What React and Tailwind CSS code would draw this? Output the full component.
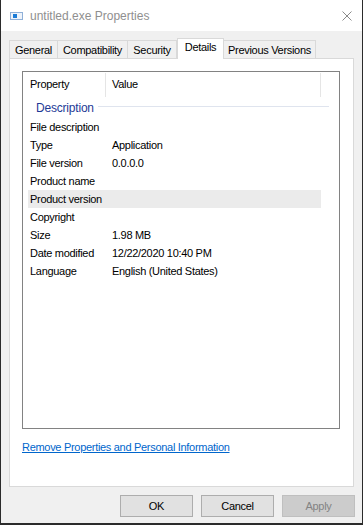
import React from "react";

const rows = [
	["File description", ""],
	["Type", "Application"],
	["File version", "0.0.0.0"],
	["Product name", ""],
	["Product version", ""],
	["Copyright", ""],
	["Size", "1.98 MB"],
	["Date modified", "12/22/2020 10:40 PM"],
	["Language", "English (United States)"],
];

const tabs = [
	{ label: "General", cls: "w-[48px] h-[18px] border-t border-l" },
	{ label: "Compatibility", cls: "w-[70px] h-[18px] border-t border-l" },
	{ label: "Security", cls: "w-[50px] h-[18px] border-t border-l border-r" },
	{ label: "Details", cls: "w-[47px] h-[21px] -mb-px border-t border-l border-r bg-white relative z-10 pb-[3px]", active: true },
	{ label: "Previous Versions", cls: "w-[92px] h-[18px] border-t border-r" },
];

const AppIcon = () => (
	<svg width="13" height="8" viewBox="0 0 13 8">
		<rect x="0.5" y="0.5" width="12" height="7" fill="#eef3fa" stroke="#8fb0d8" />
		<rect x="3" y="2" width="4" height="4" fill="#1a7bd6" />
	</svg>
);

const CloseIcon = () => (
	<svg width="10" height="10" viewBox="0 0 10 10">
		<path d="M0.5 0.5 L9.5 9.5 M9.5 0.5 L0.5 9.5" stroke="#8a8a8a" strokeWidth="1" />
	</svg>
);

export default function App() {
	return (
		<div
			className="w-[363px] h-[525px] bg-[#f0f0f0] border-l border-r border-b-2 border-[#2b2b2b] flex flex-col text-[11px] tracking-[-0.3px] text-black"
			style={{ fontFamily: '"Liberation Sans", Arial, sans-serif' }}
		>
			{/* Title bar */}
			<div className="h-[31px] bg-white flex items-center pl-[9px] pr-[10px] shrink-0">
				<AppIcon />
				<span className="ml-[7px] text-[12px] tracking-normal text-[#8f8f8f]">untitled.exe Properties</span>
				<div className="ml-auto">
					<CloseIcon />
				</div>
			</div>

			{/* Tabs */}
			<div className="pt-[7px] px-[8px] flex items-end h-[27px]">
				{tabs.map((t) => (
					<div
						key={t.label}
						className={`${t.cls} border-[#d9d9d9] flex items-center justify-center ${t.active ? "" : "bg-[#f0f0f0] pt-[2px]"}`}
					>
						{t.label}
					</div>
				))}
			</div>

			{/* Panel */}
			<div className="mx-[8px] h-[429px] border border-[#d9d9d9] bg-white pl-[12px] pt-[12px]">
				<div className="w-[318px] h-[358px] border border-[#828282] flex flex-col">
					{/* Header */}
					<div className="h-[25px] flex">
						<div className="w-[82px] pl-[7px] flex items-center">Property</div>
						<div className="w-px mt-px h-[24px] bg-[#e5e5e5]" />
						<div className="w-[214px] pl-[6px] flex items-center">Value</div>
						<div className="w-px mt-px h-[24px] bg-[#e5e5e5]" />
					</div>

					{/* Group */}
					<div className="h-[21px] flex items-center pl-[13px] pr-[10px]">
						<span className="text-[#1e3a96] text-[12px] tracking-[-0.2px]">Description</span>
						<div className="flex-1 h-px bg-[#dfe4ee] ml-[4px] -mt-[2px]" />
					</div>

					{/* Rows */}
					{rows.map(([k, v]) => (
						<div
							key={k}
							className={`ml-[5px] w-[293px] h-[18px] flex items-center ${k === "Product version" ? "bg-[#ebebeb]" : ""}`}
						>
							<div className="w-[84px] pl-[2px] whitespace-nowrap">{k}</div>
							<div className="whitespace-nowrap">{v}</div>
						</div>
					))}
				</div>

				<div className="mt-[11px] h-[14px] leading-[14px]">
					<span className="text-[#0066cc] underline">Remove Properties and Personal Information</span>
				</div>
			</div>

			{/* Buttons */}
			<div className="mt-[8px] flex justify-end gap-[8px] pr-[7px]">
				<button className="w-[73px] h-[22px] bg-[#e1e1e1] border border-[#adadad] flex items-center justify-center">
					OK
				</button>
				<button className="w-[73px] h-[22px] bg-[#e1e1e1] border border-[#adadad] flex items-center justify-center">
					Cancel
				</button>
				<button className="w-[73px] h-[22px] bg-[#cccccc] border border-[#bfbfbf] text-[#838383] flex items-center justify-center">
					Apply
				</button>
			</div>
		</div>
	);
}
